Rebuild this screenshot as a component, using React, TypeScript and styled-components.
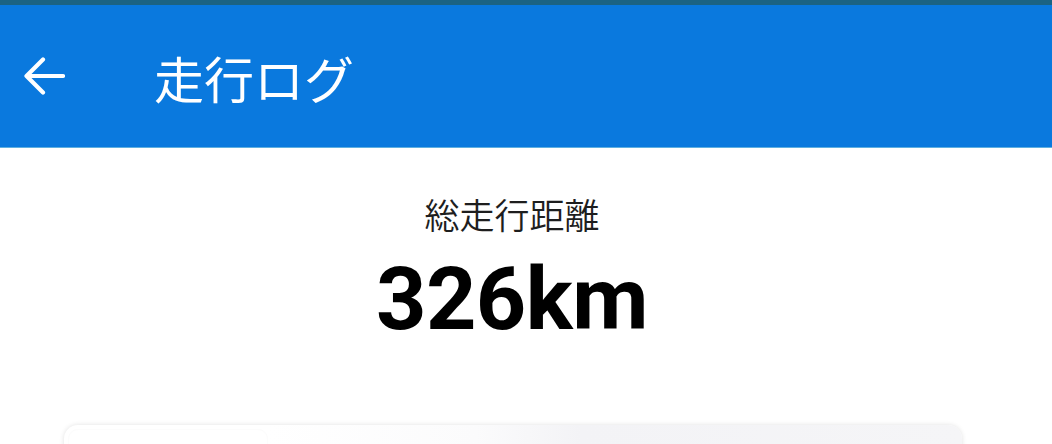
import styled, { createGlobalStyle } from 'styled-components';

// ── Global ────────────────────────────────────────────────────────────────────

const GlobalStyle = createGlobalStyle`
  html, body {
    margin: 0;
    padding: 0;
    background: #fff;
    overflow: hidden;
  }

  body {
    font-family: Roboto, 'Noto Sans CJK JP', sans-serif;
  }
`;

const Screen = styled.div`
  width: 1052px;
  height: 444px;
  display: flex;
  flex-direction: column;
  overflow: hidden;
`;

// ── Status strip + app bar ────────────────────────────────────────────────────

const StatusStrip = styled.div`
  height: 5px;
  background: #1b6383;
  flex-shrink: 0;
`;

const AppBar = styled.header`
  height: 142px;
  background: #0a79de;
  border-bottom: 1px solid #5fb0e0;
  display: flex;
  align-items: center;
  padding-left: 23px;
  gap: 89px;
  flex-shrink: 0;
`;

const BackButton = styled.button`
  width: 42px;
  height: 40px;
  padding: 0;
  border: none;
  background: none;
  color: #fff;
  display: flex;
  align-items: center;
  justify-content: center;
  cursor: pointer;
`;

const Title = styled.h1`
  margin: 2px 0 0;
  font-family: 'Noto Sans CJK JP', 'Noto Sans', sans-serif;
  font-size: 50px;
  font-weight: 400;
  line-height: 1;
  color: #fff;
`;

// ── Summary ───────────────────────────────────────────────────────────────────

const Main = styled.main`
  width: 1024px;
  display: flex;
  flex-direction: column;
  align-items: center;
  padding-top: 48px;
`;

const SummaryLabel = styled.div`
  font-family: 'Noto Sans CJK JP', 'Noto Sans', sans-serif;
  font-size: 35px;
  font-weight: 350;
  line-height: 1;
  color: #1e1e1e;
`;

const SummaryValue = styled.div`
  margin-top: 24px;
  font-family: Roboto, 'Liberation Sans', sans-serif;
  font-size: 88px;
  font-weight: 700;
  line-height: 1;
  color: #000;
  letter-spacing: -0.5px;
`;

// ── Card peeking in at the bottom ─────────────────────────────────────────────

const LogCard = styled.section`
  align-self: stretch;
  margin: 82px 62px 0 64px;
  height: 120px;
  border-radius: 14px;
  box-shadow: 0 0 5px rgba(0, 0, 0, 0.12);
  overflow: hidden;
  display: flex;
`;

const CardThumb = styled.div`
  width: 200px;
  margin: 4px 0 0 4px;
  background: #fff;
  border-radius: 10px 10px 0 0;
  box-shadow: inset 0 0 2px rgba(0, 0, 0, 0.05);
`;

const CardMap = styled.div`
  flex: 1;
  background: linear-gradient(90deg, #ffffff 0%, #fbfbfc 30%, #f3f3f6 45%, #f5f5f7 100%);
`;

function BackArrow() {
  return (
    <svg width="42" height="40" viewBox="0 0 42 40" fill="none">
      <path
        d="M40 20H4M20 3.5L3.5 20L20 36.5"
        stroke="currentColor"
        strokeWidth="4.2"
        strokeLinecap="round"
        strokeLinejoin="round"
      />
    </svg>
  );
}

export default function App() {
  return (
    <>
      <GlobalStyle />
      <Screen>
        <StatusStrip />
        <AppBar>
          <BackButton aria-label="戻る">
            <BackArrow />
          </BackButton>
          <Title>走行ログ</Title>
        </AppBar>
        <Main>
          <SummaryLabel>総走行距離</SummaryLabel>
          <SummaryValue>326km</SummaryValue>
          <LogCard>
            <CardThumb />
            <CardMap />
          </LogCard>
        </Main>
      </Screen>
    </>
  );
}
